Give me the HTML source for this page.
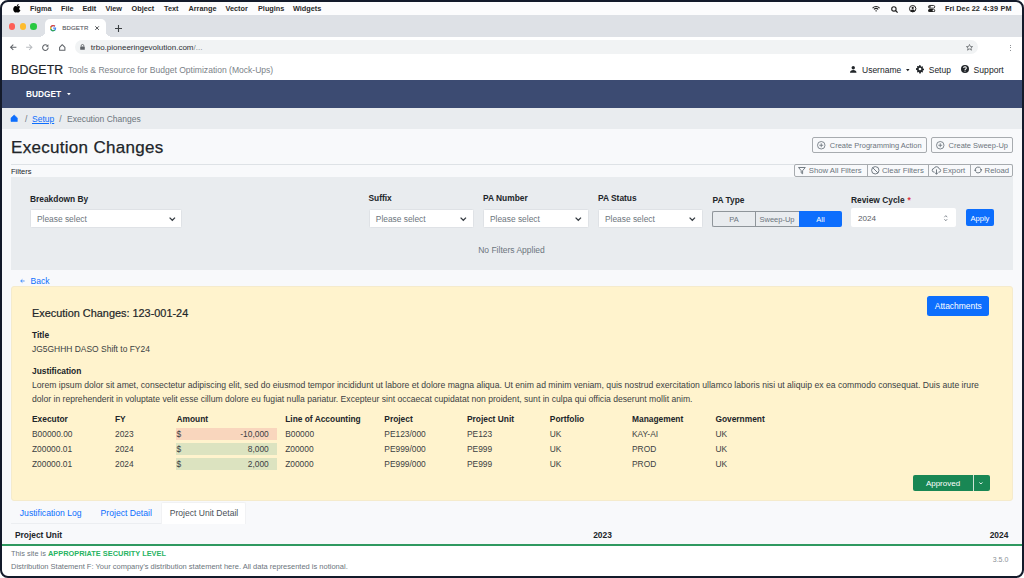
<!DOCTYPE html>
<html><head><meta charset="utf-8">
<style>
*{box-sizing:border-box;margin:0;padding:0}
html,body{width:1024px;height:578px;overflow:hidden;background:#fff}
body{font-family:"Liberation Sans",sans-serif;color:#212529;position:relative}
.a{position:absolute;white-space:nowrap}
svg.a{overflow:visible}
</style></head><body>
<div class="a" style="left:0px;top:0px;width:1024px;height:14.6px;background:#fcfcfd;"></div>
<div class="a" style="left:0px;top:14.6px;width:1024px;height:22.2px;background:#dee1e6;"></div>
<div class="a" style="left:0px;top:37px;width:1024px;height:20px;background:#ffffff;"></div>
<div class="a" style="left:0px;top:57px;width:1024px;height:23px;background:#ffffff;"></div>
<div class="a" style="left:0px;top:80px;width:1024px;height:28px;background:#3c4b72;"></div>
<div class="a" style="left:0px;top:108px;width:1024px;height:20.6px;background:#e9ecef;"></div>
<div class="a" style="left:0px;top:128.6px;width:1024px;height:416px;background:#f8f9fb;"></div>
<div class="a" style="left:0px;top:544px;width:1024px;height:34px;background:#ffffff;"></div>
<svg class="a" style="left:12.8px;top:3.9px;" width="7.5" height="8.7" viewBox="-0.5 0 9 10.4"><path d="M6.3 0.1c0.1 0.7-0.2 1.3-0.6 1.8-0.4 0.5-1 0.8-1.6 0.8-0.1-0.6 0.2-1.3 0.6-1.8 0.4-0.5 1.1-0.8 1.6-0.8zM8.4 7.4c-0.2 0.6-0.5 1.1-0.9 1.6-0.5 0.7-1 1.3-1.7 1.3-0.7 0-0.9-0.4-1.7-0.4-0.8 0-1 0.4-1.7 0.4C1.7 10.3 1.2 9.7 0.7 9-0.4 7.4-0.5 5.1 0.4 3.8 1 2.9 1.8 2.5 2.6 2.5c0.8 0 1.2 0.4 1.8 0.4 0.6 0 1-0.4 1.8-0.4 0.7 0 1.4 0.4 1.9 1-1.7 0.9-1.4 3.3 0.3 3.9z" fill="#000"/></svg>
<div class="a" style="left:30px;top:5.42px;font-size:7.3px;line-height:7.3px;color:#2a2a2a;font-weight:bold;">Figma</div>
<div class="a" style="left:61px;top:5.42px;font-size:7.3px;line-height:7.3px;color:#2a2a2a;font-weight:bold;">File</div>
<div class="a" style="left:82.5px;top:5.42px;font-size:7.3px;line-height:7.3px;color:#2a2a2a;font-weight:bold;">Edit</div>
<div class="a" style="left:105.5px;top:5.42px;font-size:7.3px;line-height:7.3px;color:#2a2a2a;font-weight:bold;">View</div>
<div class="a" style="left:131.5px;top:5.42px;font-size:7.3px;line-height:7.3px;color:#2a2a2a;font-weight:bold;">Object</div>
<div class="a" style="left:164px;top:5.42px;font-size:7.3px;line-height:7.3px;color:#2a2a2a;font-weight:bold;">Text</div>
<div class="a" style="left:188.5px;top:5.42px;font-size:7.3px;line-height:7.3px;color:#2a2a2a;font-weight:bold;">Arrange</div>
<div class="a" style="left:225.5px;top:5.42px;font-size:7.3px;line-height:7.3px;color:#2a2a2a;font-weight:bold;">Vector</div>
<div class="a" style="left:258px;top:5.42px;font-size:7.3px;line-height:7.3px;color:#2a2a2a;font-weight:bold;">Plugins</div>
<div class="a" style="left:293px;top:5.42px;font-size:7.3px;line-height:7.3px;color:#2a2a2a;font-weight:bold;">Widgets</div>
<div class="a" style="left:945px;top:5.42px;font-size:7.3px;line-height:7.3px;color:#2a2a2a;font-weight:bold;">Fri Dec 22</div>
<div class="a" style="left:983px;top:5.42px;font-size:7.3px;line-height:7.3px;color:#2a2a2a;font-weight:bold;letter-spacing:0.15px;">4:39 PM</div>
<svg class="a" style="left:871.9px;top:5.9px;" width="8.2" height="5.8" viewBox="0 0 8.2 5.8"><path d="M0.56 2.06A5 5 0 0 1 7.64 2.06" stroke="#1e1e1e" stroke-width="1.05" fill="none"/><path d="M1.98 3.48A3 3 0 0 1 6.22 3.48" stroke="#1e1e1e" stroke-width="1.05" fill="none"/><path d="M4.1 5.8L3.1 4.7A1.4 1.4 0 0 1 5.1 4.7Z" fill="#1e1e1e"/></svg>
<svg class="a" style="left:891px;top:5.5px;" width="7" height="7" viewBox="0 0 7 7"><circle cx="2.9" cy="2.9" r="2.2" stroke="#1e1e1e" stroke-width="1.1" fill="none"/><path d="M4.5 4.5L6.6 6.6" stroke="#1e1e1e" stroke-width="1.2"/></svg>
<svg class="a" style="left:908.8px;top:5.3px;" width="7.4" height="7.4" viewBox="0 0 7.4 7.4"><circle cx="3.7" cy="3.7" r="3.2" stroke="#1e1e1e" stroke-width="1" fill="none"/><circle cx="3.7" cy="2.9" r="1.1" fill="#1e1e1e"/><path d="M1.5 5.9C2 4.9 2.8 4.5 3.7 4.5S5.4 4.9 5.9 5.9A3 3 0 0 1 1.5 5.9Z" fill="#1e1e1e"/></svg>
<svg class="a" style="left:927.5px;top:5.2px;" width="7.2" height="7" viewBox="0 0 7.2 7"><rect x="0.45" y="0.45" width="6.3" height="2.7" rx="1.35" stroke="#1e1e1e" stroke-width="0.9" fill="none"/><circle cx="1.9" cy="1.8" r="0.9" fill="#1e1e1e"/><rect x="0" y="3.9" width="7.2" height="3.1" rx="1.55" fill="#1e1e1e"/><circle cx="5.5" cy="5.45" r="0.9" fill="#fff"/></svg>
<div class="a" style="left:8.8px;top:23px;width:6.6px;height:6.6px;border-radius:50%;background:#fe5f57"></div>
<div class="a" style="left:19.599999999999998px;top:23px;width:6.6px;height:6.6px;border-radius:50%;background:#febc2e"></div>
<div class="a" style="left:30.099999999999998px;top:23px;width:6.6px;height:6.6px;border-radius:50%;background:#28c840"></div>
<div class="a" style="left:45px;top:19px;width:61px;height:18px;background:#fff;border-radius:5px 5px 0 0"></div>
<div class="a" style="left:41px;top:32px;width:4px;height:5px;background:radial-gradient(circle at 0 0,#dee1e6 4px,#fff 4.3px)"></div>
<div class="a" style="left:106px;top:32px;width:4px;height:5px;background:radial-gradient(circle at 100% 0,#dee1e6 4px,#fff 4.3px)"></div>
<svg class="a" style="left:49.8px;top:24.8px;" width="6.3" height="6.3" viewBox="0 0 6.3 6.3"><path d="M6.1 2.6H3.15v1.2h1.7C4.6 4.6 4 5 3.15 5 2.1 5 1.25 4.15 1.25 3.15S2.1 1.3 3.15 1.3c0.5 0 0.9 0.15 1.25 0.45l0.9-0.9C4.75 0.35 4 0 3.15 0 1.4 0 0 1.4 0 3.15s1.4 3.15 3.15 3.15c1.8 0 3-1.25 3-3 0-0.25 0-0.45-0.05-0.7z" fill="#4285f4"/><path d="M0.35 1.7l1 0.75C1.6 1.8 2.3 1.3 3.15 1.3c0.5 0 0.9 0.15 1.25 0.45l0.9-0.9C4.75 0.35 4 0 3.15 0 1.9 0 0.85 0.7 0.35 1.7z" fill="#ea4335"/><path d="M3.15 6.3c0.85 0 1.6-0.3 2.1-0.8l-1-0.8C3.95 4.9 3.6 5 3.15 5 2.3 5 1.6 4.45 1.35 3.7l-1 0.8C0.85 5.6 1.9 6.3 3.15 6.3z" fill="#34a853"/><path d="M1.35 3.7C1.3 3.5 1.25 3.35 1.25 3.15s0.05-0.35 0.1-0.55l-1-0.8C0.1 2.2 0 2.65 0 3.15s0.1 0.95 0.35 1.35z" fill="#fbbc05"/></svg>
<div class="a" style="left:62.2px;top:25.24px;font-size:6.1px;line-height:6.1px;color:#5f6368;letter-spacing:0.15px;-webkit-text-stroke:0.15px #5f6368;">BDGETR</div>
<svg class="a" style="left:94.6px;top:26.1px;" width="4.2" height="4.2" viewBox="0 0 4.2 4.2"><path d="M0.3 0.3L3.9 3.9M3.9 0.3L0.3 3.9" stroke="#3c4043" stroke-width="0.9"/></svg>
<svg class="a" style="left:115px;top:24.8px;" width="7" height="7" viewBox="0 0 7 7"><path d="M3.5 0V7M0 3.5H7" stroke="#3c4043" stroke-width="1.1"/></svg>
<svg class="a" style="left:9.7px;top:44.3px;" width="6.5" height="6.5" viewBox="0 0 6.5 6.5"><path d="M6.4 3.25H0.8M3.3 0.6L0.6 3.25 3.3 5.9" stroke="#5f6368" stroke-width="1.05" fill="none"/></svg>
<svg class="a" style="left:25.8px;top:44.3px;" width="6.5" height="6.5" viewBox="0 0 6.5 6.5"><path d="M0.1 3.25H5.7M3.2 0.6L5.9 3.25 3.2 5.9" stroke="#b9bcc0" stroke-width="1.05" fill="none"/></svg>
<svg class="a" style="left:42.4px;top:44.3px;" width="6.8" height="6.8" viewBox="0 0 6.8 6.8"><path d="M5.8 2.2A2.8 2.8 0 1 0 6.2 3.6" stroke="#5f6368" stroke-width="1.05" fill="none"/><path d="M6.4 0.3V2.8H3.9Z" fill="#5f6368"/></svg>
<svg class="a" style="left:59px;top:44px;" width="6.5" height="6.8" viewBox="0 0 6.5 6.8"><path d="M0.6 3.3L3.25 0.7 5.9 3.3V6.3H0.6Z" stroke="#5f6368" stroke-width="1.05" fill="none" stroke-linejoin="round"/></svg>
<div class="a" style="left:75px;top:40px;width:903px;height:14px;background:#f1f3f4;border-radius:7px"></div>
<svg class="a" style="left:80px;top:44px;" width="5" height="5.7" viewBox="0 0 5 5.7"><path d="M1.2 2.5V1.8A1.3 1.3 0 0 1 3.8 1.8V2.5" stroke="#5f6368" stroke-width="0.9" fill="none"/><rect x="0.2" y="2.4" width="4.6" height="3.3" rx="0.5" fill="#5f6368"/></svg>
<div class="a" style="left:90.8px;top:43.93px;font-size:8.0px;line-height:8.0px;color:#303134;">trbo.pioneeringevolution.com<span style="color:#80868b">/...</span></div>
<svg class="a" style="left:966px;top:43.8px;" width="7" height="6.6" viewBox="0 0 7 6.6"><path d="M3.5 0.5L4.4 2.5 6.6 2.6 4.9 4 5.5 6.2 3.5 5 1.5 6.2 2.1 4 0.4 2.6 2.6 2.5Z" stroke="#5f6368" stroke-width="0.75" fill="none" stroke-linejoin="round"/></svg>
<div class="a" style="left:1009.5px;top:44.5px;width:1.15px;height:1.15px;border-radius:50%;background:#6b6f74"></div>
<div class="a" style="left:1009.5px;top:47.2px;width:1.15px;height:1.15px;border-radius:50%;background:#6b6f74"></div>
<div class="a" style="left:1009.5px;top:49.9px;width:1.15px;height:1.15px;border-radius:50%;background:#6b6f74"></div>
<div class="a" style="left:11px;top:63.89px;font-size:12.3px;line-height:12.3px;color:#212529;letter-spacing:0.2px;-webkit-text-stroke:0.2px #212529;">BDGETR</div>
<div class="a" style="left:68px;top:65.56px;font-size:8.55px;line-height:8.55px;color:#7b8288;">Tools &amp; Resource for Budget Optimization (Mock-Ups)</div>
<svg class="a" style="left:849.7px;top:66.3px;" width="6.5" height="6.7" viewBox="0 0 6.5 6.7"><circle cx="3.25" cy="1.7" r="1.7" fill="#212529"/><path d="M0 6.7C0 4.7 1.4 3.9 3.25 3.9S6.5 4.7 6.5 6.7Z" fill="#212529"/></svg>
<div class="a" style="left:862px;top:65.70px;font-size:8.5px;line-height:8.5px;color:#212529;">Username</div>
<svg class="a" style="left:906px;top:68.9px;" width="3.6" height="2.2" viewBox="0 0 3.6 2.2"><path d="M0 0H3.6L1.8 2.2Z" fill="#212529"/></svg>
<svg class="a" style="left:916px;top:65.3px;" width="8" height="8" viewBox="0 0 8 8"><path d="M4 0.3l0.75 0.1 0.2 1.05 0.55 0.3 1-0.4 0.55 0.55-0.4 1 0.3 0.55 1.05 0.2v1.5l-1.05 0.2-0.3 0.55 0.4 1-0.55 0.55-1-0.4-0.55 0.3-0.2 1.05H3.25l-0.2-1.05-0.55-0.3-1 0.4-0.55-0.55 0.4-1-0.3-0.55L0 4.75v-1.5l1.05-0.2 0.3-0.55-0.4-1 0.55-0.55 1 0.4 0.55-0.3 0.2-1.05z" fill="#212529"/><circle cx="4" cy="4" r="1.35" fill="#fff"/></svg>
<div class="a" style="left:928.8px;top:65.75px;font-size:8.45px;line-height:8.45px;color:#212529;">Setup</div>
<svg class="a" style="left:961px;top:65.3px;" width="8" height="8" viewBox="0 0 8 8"><circle cx="4" cy="4" r="4" fill="#212529"/><path d="M2.7 3.1A1.3 1.25 0 1 1 4.5 4.2C4.1 4.4 4 4.6 4 5" stroke="#fff" stroke-width="1.05" fill="none"/><circle cx="4" cy="6.1" r="0.6" fill="#fff"/></svg>
<div class="a" style="left:973.6px;top:65.62px;font-size:8.6px;line-height:8.6px;color:#212529;">Support</div>
<div class="a" style="left:26px;top:90.27px;font-size:8.3px;line-height:8.3px;color:#ffffff;font-weight:bold;">BUDGET</div>
<svg class="a" style="left:67.3px;top:93px;" width="3.8" height="2.3" viewBox="0 0 3.8 2.3"><path d="M0 0H3.8L1.9 2.3Z" fill="#fff"/></svg>
<svg class="a" style="left:11px;top:115.3px;" width="6.3" height="6.5" viewBox="0 0 6.3 6.5"><path d="M3.15 0L6.3 2.9V6.5H0V2.9Z" fill="#0d6efd" stroke="#0d6efd" stroke-width="0.6" stroke-linejoin="round"/></svg>
<div class="a" style="left:25px;top:114.90px;font-size:8.5px;line-height:8.5px;color:#6c757d;">/</div>
<div class="a" style="left:32px;top:114.90px;font-size:8.5px;line-height:8.5px;color:#0d6efd;text-decoration:underline;">Setup</div>
<div class="a" style="left:59.2px;top:114.90px;font-size:8.5px;line-height:8.5px;color:#6c757d;">/</div>
<div class="a" style="left:67px;top:114.90px;font-size:8.5px;line-height:8.5px;color:#6c757d;">Execution Changes</div>
<div class="a" style="left:11px;top:139.11px;font-size:17px;line-height:17px;color:#212529;letter-spacing:0.3px;-webkit-text-stroke:0.25px #212529;">Execution Changes</div>
<div class="a" style="left:11px;top:164px;width:1002px;height:1px;background:#dee2e6;"></div>
<div class="a" style="left:11px;top:167.95px;font-size:7.5px;line-height:7.5px;color:#212529;">Filters</div>
<div class="a" style="left:812px;top:137.3px;width:114.7px;height:16px;border:1px solid #a7abaf;border-radius:2px"></div>
<svg class="a" style="left:816.75px;top:141.05px;" width="8.5" height="8.5" viewBox="0 0 8.5 8.5"><circle cx="4.25" cy="4.25" r="3.75" stroke="#6c757d" stroke-width="0.85" fill="none"/><path d="M4.25 2.3V6.2M2.3 4.25H6.2" stroke="#6c757d" stroke-width="0.85"/></svg>
<div class="a" style="left:829.8px;top:141.98px;font-size:7.47px;line-height:7.47px;color:#6c757d;">Create Programming Action</div>
<div class="a" style="left:931px;top:137.3px;width:82px;height:16px;border:1px solid #a7abaf;border-radius:2px"></div>
<svg class="a" style="left:935.95px;top:141.05px;" width="8.5" height="8.5" viewBox="0 0 8.5 8.5"><circle cx="4.25" cy="4.25" r="3.75" stroke="#6c757d" stroke-width="0.85" fill="none"/><path d="M4.25 2.3V6.2M2.3 4.25H6.2" stroke="#6c757d" stroke-width="0.85"/></svg>
<div class="a" style="left:948.6px;top:141.98px;font-size:7.47px;line-height:7.47px;color:#6c757d;">Create Sweep-Up</div>
<div class="a" style="left:793.5px;top:164.1px;width:219.9px;height:12.6px;border:1px solid #a7abaf;border-radius:2px"></div>
<div class="a" style="left:866.6px;top:164.1px;width:1px;height:12.6px;background:#a7abaf;"></div>
<div class="a" style="left:927.6px;top:164.1px;width:1px;height:12.6px;background:#a7abaf;"></div>
<div class="a" style="left:969.8px;top:164.1px;width:1px;height:12.6px;background:#a7abaf;"></div>
<svg class="a" style="left:798px;top:166.8px;" width="7.8" height="7.2" viewBox="0 0 7.8 7.2"><path d="M0.5 0.5H7.3L4.6 3.7V6.8L3.2 5.9V3.7Z" stroke="#6c757d" stroke-width="0.95" fill="none" stroke-linejoin="round"/></svg>
<div class="a" style="left:808.75px;top:166.64px;font-size:7.75px;line-height:7.75px;color:#6c757d;">Show All Filters</div>
<svg class="a" style="left:870.9px;top:166.2px;" width="8.6" height="8.6" viewBox="0 0 8.6 8.6"><circle cx="4.3" cy="4.3" r="3.7" stroke="#6c757d" stroke-width="0.95" fill="none"/><path d="M1.7 1.7L6.9 6.9" stroke="#6c757d" stroke-width="0.95"/></svg>
<div class="a" style="left:882px;top:166.64px;font-size:7.75px;line-height:7.75px;color:#6c757d;">Clear Filters</div>
<svg class="a" style="left:931.9px;top:166.2px;" width="9" height="8.8" viewBox="0 0 9 8.8"><path d="M2.4 6.1H2A1.8 1.8 0 0 1 2 2.5 2.7 2.7 0 0 1 7.2 2.9 1.6 1.6 0 0 1 7 6.1H6.6" stroke="#6c757d" stroke-width="0.95" fill="none"/><path d="M4.5 3.4V8.2M3 6.6L4.5 8.3 6 6.6" stroke="#6c757d" stroke-width="0.95" fill="none"/></svg>
<div class="a" style="left:942.8px;top:166.64px;font-size:7.75px;line-height:7.75px;color:#6c757d;">Export</div>
<svg class="a" style="left:974.2px;top:166.3px;" width="8.4" height="8" viewBox="0 0 8.4 8"><path d="M1.05 4.2A3.15 3.15 0 0 1 6.9 2.6" stroke="#6c757d" stroke-width="0.95" fill="none"/><path d="M7.35 3.8A3.15 3.15 0 0 1 1.5 5.4" stroke="#6c757d" stroke-width="0.95" fill="none"/><path d="M5.9 3.1H8.3L7.1 4.8Z M0.1 4.9H2.5L1.3 3.2Z" fill="#6c757d"/></svg>
<div class="a" style="left:984.6px;top:166.64px;font-size:7.75px;line-height:7.75px;color:#6c757d;">Reload</div>
<div class="a" style="left:11px;top:177px;width:1002px;height:93px;background:#e9ecef;"></div>
<div class="a" style="left:30px;top:194.59px;font-size:8.4px;line-height:8.4px;color:#212529;font-weight:bold;">Breakdown By</div>
<div class="a" style="left:30px;top:208.7px;width:152px;height:19.6px;background:#fff;border:0.6px solid #dfe2e6;border-radius:1.5px"></div>
<div class="a" style="left:37px;top:214.59px;font-size:8.4px;line-height:8.4px;color:#6c757d;">Please select</div>
<svg class="a" style="left:168.5px;top:216.6px;" width="6.6" height="4" viewBox="0 0 6.6 4"><path d="M0.6 0.6L3.3 3.3 6 0.6" stroke="#343a40" stroke-width="1.25" fill="none"/></svg>
<div class="a" style="left:368.5px;top:194.39px;font-size:8.4px;line-height:8.4px;color:#212529;font-weight:bold;">Suffix</div>
<div class="a" style="left:368.8px;top:208.7px;width:104.8px;height:19.6px;background:#fff;border:0.6px solid #dfe2e6;border-radius:1.5px"></div>
<div class="a" style="left:375.8px;top:214.59px;font-size:8.4px;line-height:8.4px;color:#6c757d;">Please select</div>
<svg class="a" style="left:460.1px;top:216.6px;" width="6.6" height="4" viewBox="0 0 6.6 4"><path d="M0.6 0.6L3.3 3.3 6 0.6" stroke="#343a40" stroke-width="1.25" fill="none"/></svg>
<div class="a" style="left:483px;top:194.39px;font-size:8.4px;line-height:8.4px;color:#212529;font-weight:bold;">PA Number</div>
<div class="a" style="left:483px;top:208.7px;width:105.5px;height:19.6px;background:#fff;border:0.6px solid #dfe2e6;border-radius:1.5px"></div>
<div class="a" style="left:490px;top:214.59px;font-size:8.4px;line-height:8.4px;color:#6c757d;">Please select</div>
<svg class="a" style="left:575.0px;top:216.6px;" width="6.6" height="4" viewBox="0 0 6.6 4"><path d="M0.6 0.6L3.3 3.3 6 0.6" stroke="#343a40" stroke-width="1.25" fill="none"/></svg>
<div class="a" style="left:598px;top:194.39px;font-size:8.4px;line-height:8.4px;color:#212529;font-weight:bold;">PA Status</div>
<div class="a" style="left:598px;top:208.7px;width:104.8px;height:19.6px;background:#fff;border:0.6px solid #dfe2e6;border-radius:1.5px"></div>
<div class="a" style="left:605px;top:214.59px;font-size:8.4px;line-height:8.4px;color:#6c757d;">Please select</div>
<svg class="a" style="left:689.3px;top:216.6px;" width="6.6" height="4" viewBox="0 0 6.6 4"><path d="M0.6 0.6L3.3 3.3 6 0.6" stroke="#343a40" stroke-width="1.25" fill="none"/></svg>
<div class="a" style="left:712.5px;top:195.89px;font-size:8.4px;line-height:8.4px;color:#212529;font-weight:bold;">PA Type</div>
<div class="a" style="left:712px;top:210.6px;width:86.5px;height:16.1px;border:1px solid #8f959a;border-right:none;border-radius:2px 0 0 2px"></div>
<div class="a" style="left:755px;top:210.6px;width:1px;height:16.1px;background:#8f959a;"></div>
<div class="a" style="left:798.5px;top:210.6px;width:43.9px;height:16.1px;background:#0d6efd;border-radius:0 2px 2px 0"></div>
<div class="a" style="left:634px;width:200px;text-align:center;top:216.25px;font-size:7.5px;line-height:7.5px;color:#6c757d;">PA</div>
<div class="a" style="left:677px;width:200px;text-align:center;top:216.25px;font-size:7.5px;line-height:7.5px;color:#6c757d;">Sweep-Up</div>
<div class="a" style="left:720.5px;width:200px;text-align:center;top:216.25px;font-size:7.5px;line-height:7.5px;color:#ffffff;">All</div>
<div class="a" style="left:851px;top:195.79px;font-size:8.4px;line-height:8.4px;color:#212529;font-weight:bold;">Review Cycle</div>
<div class="a" style="left:907.6px;top:195.89px;font-size:8.4px;line-height:8.4px;color:#dc3545;font-weight:bold;">*</div>
<div class="a" style="left:851.4px;top:208.2px;width:104.9px;height:18.6px;background:#fff;border-radius:2px"></div>
<div class="a" style="left:857.9px;top:215.14px;font-size:8.1px;line-height:8.1px;color:#5a6066;">2024</div>
<svg class="a" style="left:944.3px;top:215.2px;" width="3.6" height="6.4" viewBox="0 0 3.6 6.4"><path d="M0.4 2.2L1.8 0.6 3.2 2.2M0.4 4.2L1.8 5.8 3.2 4.2" stroke="#6c757d" stroke-width="0.8" fill="none"/></svg>
<div class="a" style="left:965.6px;top:209.4px;width:28.5px;height:16.6px;background:#0d6efd;border-radius:2px"></div>
<div class="a" style="left:879.9px;width:200px;text-align:center;top:214.57px;font-size:7.6px;line-height:7.6px;color:#ffffff;">Apply</div>
<div class="a" style="left:411.5px;width:200px;text-align:center;top:245.80px;font-size:8.5px;line-height:8.5px;color:#6c757d;">No Filters Applied</div>
<svg class="a" style="left:19.5px;top:279.2px;" width="4.6" height="4" viewBox="0 0 4.6 4"><path d="M4.6 2H0.8M2.4 0.4L0.7 2 2.4 3.6" stroke="#0d6efd" stroke-width="0.7" fill="none"/></svg>
<div class="a" style="left:30.5px;top:277.26px;font-size:8.55px;line-height:8.55px;color:#0d6efd;">Back</div>
<div class="a" style="left:11px;top:286px;width:1001.5px;height:214.7px;background:#fff3cd;border:0.6px solid #f5ebcc;border-radius:3px"></div>
<div class="a" style="left:32px;top:308.47px;font-size:10.9px;line-height:10.9px;color:#212529;-webkit-text-stroke:0.2px #212529;">Execution Changes: 123-001-24</div>
<div class="a" style="left:927.2px;top:295.9px;width:62.2px;height:20px;background:#0d6efd;border-radius:2.5px"></div>
<div class="a" style="left:858.3px;width:200px;text-align:center;top:302.04px;font-size:8.46px;line-height:8.46px;color:#ffffff;">Attachments</div>
<div class="a" style="left:32px;top:330.59px;font-size:8.4px;line-height:8.4px;color:#212529;font-weight:bold;">Title</div>
<div class="a" style="left:32px;top:345.34px;font-size:8.46px;line-height:8.46px;color:#3b3f43;">JG5GHHH DASO Shift to FY24</div>
<div class="a" style="left:32px;top:367.29px;font-size:8.4px;line-height:8.4px;color:#212529;font-weight:bold;">Justification</div>
<div class="a" style="left:32px;top:381.29px;font-size:8.63px;line-height:8.63px;color:#3b3f43;">Lorem ipsum dolor sit amet, consectetur adipiscing elit, sed do eiusmod tempor incididunt ut labore et dolore magna aliqua. Ut enim ad minim veniam, quis nostrud exercitation ullamco laboris nisi ut aliquip ex ea commodo consequat. Duis aute irure</div>
<div class="a" style="left:32px;top:394.52px;font-size:8.6px;line-height:8.6px;color:#3b3f43;">dolor in reprehenderit in voluptate velit esse cillum dolore eu fugiat nulla pariatur. Excepteur sint occaecat cupidatat non proident, sunt in culpa qui officia deserunt mollit anim.</div>
<div class="a" style="left:32px;top:415.09px;font-size:8.4px;line-height:8.4px;color:#212529;font-weight:bold;">Executor</div>
<div class="a" style="left:115px;top:415.09px;font-size:8.4px;line-height:8.4px;color:#212529;font-weight:bold;">FY</div>
<div class="a" style="left:176.5px;top:415.09px;font-size:8.4px;line-height:8.4px;color:#212529;font-weight:bold;">Amount</div>
<div class="a" style="left:285.2px;top:415.09px;font-size:8.4px;line-height:8.4px;color:#212529;font-weight:bold;">Line of Accounting</div>
<div class="a" style="left:384.3px;top:415.09px;font-size:8.4px;line-height:8.4px;color:#212529;font-weight:bold;">Project</div>
<div class="a" style="left:467px;top:415.09px;font-size:8.4px;line-height:8.4px;color:#212529;font-weight:bold;">Project Unit</div>
<div class="a" style="left:549.8px;top:415.09px;font-size:8.4px;line-height:8.4px;color:#212529;font-weight:bold;">Portfolio</div>
<div class="a" style="left:632px;top:415.09px;font-size:8.4px;line-height:8.4px;color:#212529;font-weight:bold;">Management</div>
<div class="a" style="left:715.4px;top:415.09px;font-size:8.4px;line-height:8.4px;color:#212529;font-weight:bold;">Government</div>
<div class="a" style="left:176px;top:427.8px;width:101.3px;height:12.2px;background:#f9d6bd;"></div>
<div class="a" style="left:32px;top:430.19px;font-size:8.4px;line-height:8.4px;color:#3b3f43;">B00000.00</div>
<div class="a" style="left:115px;top:430.19px;font-size:8.4px;line-height:8.4px;color:#3b3f43;">2023</div>
<div class="a" style="left:176.5px;top:430.19px;font-size:8.4px;line-height:8.4px;color:#3b3f43;">$</div>
<div class="a" style="right:755.3px;top:430.19px;font-size:8.4px;line-height:8.4px;color:#3b3f43;">-10,000</div>
<div class="a" style="left:285.2px;top:430.19px;font-size:8.4px;line-height:8.4px;color:#3b3f43;">B00000</div>
<div class="a" style="left:384.3px;top:430.19px;font-size:8.4px;line-height:8.4px;color:#3b3f43;">PE123/000</div>
<div class="a" style="left:467px;top:430.19px;font-size:8.4px;line-height:8.4px;color:#3b3f43;">PE123</div>
<div class="a" style="left:549.8px;top:430.19px;font-size:8.4px;line-height:8.4px;color:#3b3f43;">UK</div>
<div class="a" style="left:632px;top:430.19px;font-size:8.4px;line-height:8.4px;color:#3b3f43;">KAY-AI</div>
<div class="a" style="left:715.4px;top:430.19px;font-size:8.4px;line-height:8.4px;color:#3b3f43;">UK</div>
<div class="a" style="left:176px;top:442.6px;width:101.3px;height:12.2px;background:#dce3c0;"></div>
<div class="a" style="left:32px;top:444.99px;font-size:8.4px;line-height:8.4px;color:#3b3f43;">Z00000.01</div>
<div class="a" style="left:115px;top:444.99px;font-size:8.4px;line-height:8.4px;color:#3b3f43;">2024</div>
<div class="a" style="left:176.5px;top:444.99px;font-size:8.4px;line-height:8.4px;color:#3b3f43;">$</div>
<div class="a" style="right:755.3px;top:444.99px;font-size:8.4px;line-height:8.4px;color:#3b3f43;">8,000</div>
<div class="a" style="left:285.2px;top:444.99px;font-size:8.4px;line-height:8.4px;color:#3b3f43;">Z00000</div>
<div class="a" style="left:384.3px;top:444.99px;font-size:8.4px;line-height:8.4px;color:#3b3f43;">PE999/000</div>
<div class="a" style="left:467px;top:444.99px;font-size:8.4px;line-height:8.4px;color:#3b3f43;">PE999</div>
<div class="a" style="left:549.8px;top:444.99px;font-size:8.4px;line-height:8.4px;color:#3b3f43;">UK</div>
<div class="a" style="left:632px;top:444.99px;font-size:8.4px;line-height:8.4px;color:#3b3f43;">PROD</div>
<div class="a" style="left:715.4px;top:444.99px;font-size:8.4px;line-height:8.4px;color:#3b3f43;">UK</div>
<div class="a" style="left:176px;top:457.5px;width:101.3px;height:12.2px;background:#dce3c0;"></div>
<div class="a" style="left:32px;top:460.09px;font-size:8.4px;line-height:8.4px;color:#3b3f43;">Z00000.01</div>
<div class="a" style="left:115px;top:460.09px;font-size:8.4px;line-height:8.4px;color:#3b3f43;">2024</div>
<div class="a" style="left:176.5px;top:460.09px;font-size:8.4px;line-height:8.4px;color:#3b3f43;">$</div>
<div class="a" style="right:755.3px;top:460.09px;font-size:8.4px;line-height:8.4px;color:#3b3f43;">2,000</div>
<div class="a" style="left:285.2px;top:460.09px;font-size:8.4px;line-height:8.4px;color:#3b3f43;">Z00000</div>
<div class="a" style="left:384.3px;top:460.09px;font-size:8.4px;line-height:8.4px;color:#3b3f43;">PE999/000</div>
<div class="a" style="left:467px;top:460.09px;font-size:8.4px;line-height:8.4px;color:#3b3f43;">PE999</div>
<div class="a" style="left:549.8px;top:460.09px;font-size:8.4px;line-height:8.4px;color:#3b3f43;">UK</div>
<div class="a" style="left:632px;top:460.09px;font-size:8.4px;line-height:8.4px;color:#3b3f43;">PROD</div>
<div class="a" style="left:715.4px;top:460.09px;font-size:8.4px;line-height:8.4px;color:#3b3f43;">UK</div>
<div class="a" style="left:912.7px;top:474.9px;width:76.9px;height:15.9px;background:#198754;border-radius:2px"></div>
<div class="a" style="left:973px;top:474.9px;width:0.8px;height:15.9px;background:#cfe3d6;"></div>
<div class="a" style="left:843px;width:200px;text-align:center;top:479.63px;font-size:8.0px;line-height:8.0px;color:#ffffff;">Approved</div>
<svg class="a" style="left:979.2px;top:481.6px;" width="3.8" height="2.6" viewBox="0 0 3.8 2.6"><path d="M0.4 0.4L1.9 2 3.4 0.4" stroke="#fff" stroke-width="0.9" fill="none"/></svg>
<div class="a" style="left:11px;top:523px;width:150px;height:1px;background:#eceef1;"></div>
<div class="a" style="left:160.8px;top:502.2px;width:85.2px;height:22px;background:#fff;border:0.6px solid #f1f2f4;border-bottom:none;border-radius:2px 2px 0 0"></div>
<div class="a" style="left:19.8px;top:509.28px;font-size:8.65px;line-height:8.65px;color:#0d6efd;">Justification Log</div>
<div class="a" style="left:100.6px;top:509.28px;font-size:8.65px;line-height:8.65px;color:#0d6efd;">Project Detail</div>
<div class="a" style="left:169.8px;top:509.36px;font-size:8.55px;line-height:8.55px;color:#495057;">Project Unit Detail</div>
<div class="a" style="left:15px;top:531.09px;font-size:8.4px;line-height:8.4px;color:#212529;font-weight:bold;">Project Unit</div>
<div class="a" style="left:593.2px;top:530.99px;font-size:8.4px;line-height:8.4px;color:#212529;font-weight:bold;">2023</div>
<div class="a" style="right:15.700000000000045px;top:530.99px;font-size:8.4px;line-height:8.4px;color:#212529;font-weight:bold;">2024</div>
<div class="a" style="left:0px;top:543.8px;width:1024px;height:1.8px;background:#2f9960;"></div>
<div class="a" style="left:11px;top:550.34px;font-size:7.4px;line-height:7.4px;color:#6c757d;">This site is <b style="color:#28b463">APPROPRIATE SECURITY LEVEL</b></div>
<div class="a" style="left:11px;top:562.65px;font-size:7.5px;line-height:7.5px;color:#6c757d;">Distribution Statement F: Your company’s distribution statement here. All data represented is notional.</div>
<div class="a" style="right:15.700000000000045px;top:556.37px;font-size:7.0px;line-height:7.0px;color:#8a9096;">3.5.0</div>
<div class="a" style="left:0;top:0;width:1024px;height:578px;border:2px solid #131a2a;border-bottom-width:2.5px;border-radius:8px;box-shadow:0 0 0 6px #fff;z-index:50"></div>
</body></html>
